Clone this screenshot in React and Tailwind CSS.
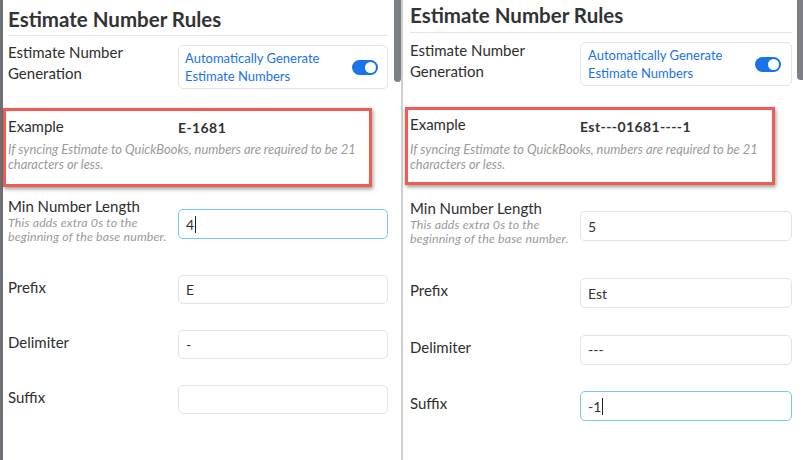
import React from "react";

const font = { fontFamily: "Lato, 'Noto Sans', sans-serif" };

function FakeInput({ value, focused, caret, className }) {
  const border = focused ? "border-[#74c7ee]" : "border-[#e3e3e3]";
  return (
    <div className={`flex items-center rounded-[5px] border bg-white px-[7px] text-[14px] text-[#333] ${border} ${className}`}>
      <span>{value}</span>
      {caret ? <span className="ml-[1px] h-[17px] w-[1px] bg-[#222]" /> : null}
    </div>
  );
}

function Toggle() {
  return (
    <div className="flex h-[15px] w-[26px] items-center justify-end rounded-full bg-[#1a73e8] pr-[2px]">
      <div className="h-[11px] w-[11px] rounded-full bg-white" />
    </div>
  );
}

function Panel({ cfg }) {
  return (
    <div className={`relative h-[460px] shrink-0 ${cfg.panel}`} style={font}>
      <div className={cfg.thumb} />
      <h2 className={`text-[20.5px] font-bold leading-[24px] text-[#333] ${cfg.heading}`}>Estimate Number Rules</h2>
      <div className={`h-px bg-[#e6e6e6] ${cfg.sep}`} />

      <div className={`flex items-start ${cfg.row1}`}>
        <div className="w-[170px] shrink-0 text-[15px] leading-[21px] text-[#2e2e2e]">
          Estimate Number<br />Generation
        </div>
        <div className={`flex h-[44px] flex-1 items-center justify-between rounded-[5px] border border-[#e4e4e4] ${cfg.toggleBox}`}>
          <div className="text-[13px] leading-[18px] text-[#1a73e8]">
            Automatically Generate<br />Estimate Numbers
          </div>
          <Toggle />
        </div>
      </div>

      <div className={`border-[3px] border-[#f25c50] pl-[2px] shadow-[1px_2px_4px_rgba(0,0,0,0.4)] ${cfg.red}`}>
        <div className="flex items-start">
          <div className="w-[170px] shrink-0 text-[15px] leading-[20px] text-[#2e2e2e]">Example</div>
          <div className={`text-[14px] font-bold leading-[20px] tracking-[0.4px] text-[#333] ${cfg.value}`}>{cfg.example}</div>
        </div>
        <div className={`text-[12.9px] italic leading-[15px] text-[#9a9a9a] ${cfg.note}`}>
          If syncing Estimate to QuickBooks, numbers are required to be 21 characters or less.
        </div>
      </div>

      <div className={cfg.minRow}>
        <div className="flex items-start">
          <div className="w-[170px] shrink-0">
            <div className="text-[15px] leading-[19px] text-[#2e2e2e]">Min Number Length</div>
            <div className="text-[12.4px] italic leading-[13.5px] tracking-[0.15px] text-[#9a9a9a]">
              This adds extra 0s to the<br />beginning of the base number.
            </div>
          </div>
          <FakeInput value={cfg.min} focused={cfg.focus === "min"} caret={cfg.focus === "min"} className="mt-[12px] h-[30px] flex-1" />
        </div>
      </div>

      {[
        ["Prefix", cfg.prefix, "prefix"],
        ["Delimiter", cfg.delim, "delim"],
        ["Suffix", cfg.suffix, "suffix"],
      ].map(([label, value, key]) => (
        <div key={key} className={`flex items-start ${cfg.rowH}`}>
          <div className="w-[170px] shrink-0 pt-[2px] text-[15px] leading-[20px] text-[#2e2e2e]">{label}</div>
          <FakeInput value={value} focused={cfg.focus === key} caret={cfg.focus === key} className={`flex-1 ${cfg.inputH}`} />
        </div>
      ))}
    </div>
  );
}

const left = {
  panel: "w-[401px] border-l-[3px] border-[#6d7075] pl-[5px] pr-[13px]",
  thumb: "absolute right-0 top-0 h-[82px] w-[7px] rounded-b-[4px] bg-[#7c7f85]",
  heading: "pt-[7px]",
  sep: "mt-[4px]",
  row1: "mt-[6px]",
  toggleBox: "mt-[3px] pl-[6px] pr-[9px]",
  red: "mt-[19px] -ml-[5px] w-[369px] pt-[5px] pb-[12px]",
  value: "mt-[2px]",
  note: "mt-[4px]",
  example: "E-1681",
  minRow: "mt-[10px] h-[78px]",
  rowH: "h-[55px]",
  inputH: "h-[29px]",
  min: "4",
  prefix: "E",
  delim: "-",
  suffix: "",
  focus: "min",
};

const right = {
  panel: "w-[402px] border-l-[2px] border-[#cfcfcf] pl-[7px] pr-[11px]",
  thumb: "absolute right-0 top-0 h-[80px] w-[6px] rounded-bl-[4px] bg-[#7c7f85]",
  heading: "pt-[3px]",
  sep: "mt-[5px]",
  row1: "mt-[7px]",
  toggleBox: "mt-[2px] pl-[7px] pr-[10px]",
  red: "mt-[21px] -ml-[5px] w-[370px] pt-[4px] pb-[10px]",
  value: "mt-[3px]",
  note: "mt-[5px]",
  example: "Est---01681----1",
  minRow: "mt-[14px] h-[79px]",
  rowH: "h-[56.5px]",
  inputH: "h-[30px]",
  min: "5",
  prefix: "Est",
  delim: "---",
  suffix: "-1",
  focus: "suffix",
};

export default function App() {
  return (
    <div className="flex h-[460px] w-[803px] overflow-hidden bg-white">
      <Panel cfg={left} />
      <Panel cfg={right} />
    </div>
  );
}
